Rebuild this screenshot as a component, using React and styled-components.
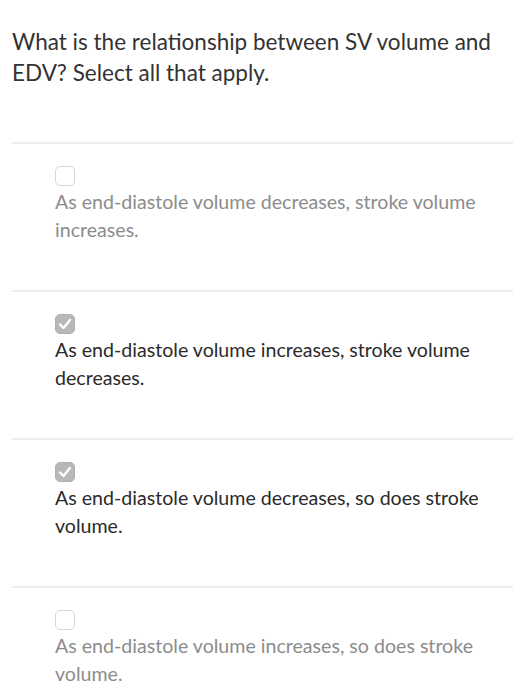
import React from "react";
import styled, { createGlobalStyle } from "styled-components";

const GlobalStyle = createGlobalStyle`
  body {
    margin: 0;
    background: #fff;
    font-family: Lato, "Open Sans", sans-serif;
  }
`;

const Page = styled.div`
  padding: 26px 0 0 12px;
`;

const Question = styled.h1`
  margin: 0;
  padding-right: 12px;
  font-size: 22.5px;
  font-weight: 400;
  line-height: 31px;
  color: #333;
`;

const Spacer = styled.div`
  height: 54px;
`;

const Option = styled.div`
  border-top: 2px solid #ededed;
  padding: 22px 12px 45px 43px;
  height: 148px;
  box-sizing: border-box;
`;

const Box = styled.div`
  width: 20px;
  height: 20px;
  box-sizing: border-box;
  border-radius: 5px;
  border: 1px solid ${({ checked }) => (checked ? "#b0b0b0" : "#d8d8d8")};
  background: ${({ checked }) => (checked ? "#b8b8b8" : "#fff")};
  display: flex;
  align-items: center;
  justify-content: center;
  margin-bottom: 2px;
`;

const Label = styled.div`
  font-size: 19.6px;
  line-height: 28px;
  color: ${({ checked }) => (checked ? "#2b2b2b" : "#8c8c8c")};
`;

const options = [
  { text: "As end-diastole volume decreases, stroke volume increases.", checked: false },
  { text: "As end-diastole volume increases, stroke volume decreases.", checked: true },
  { text: "As end-diastole volume decreases, so does stroke volume.", checked: true },
  { text: "As end-diastole volume increases, so does stroke volume.", checked: false },
];

export default function App() {
  return (
    <Page>
      <GlobalStyle />
      <Question>
        What is the relationship between SV volume and EDV? Select all that apply.
      </Question>
      <Spacer />
      {options.map((o, i) => (
        <Option key={i}>
          <Box checked={o.checked}>
            {o.checked && (
              <svg width="16" height="16" viewBox="0 0 16 16">
                <path d="M3 8.5 L6.5 12 L13 4" fill="none" stroke="#fff" strokeWidth="2.4" strokeLinecap="round" strokeLinejoin="round" />
              </svg>
            )}
          </Box>
          <Label checked={o.checked}>{o.text}</Label>
        </Option>
      ))}
    </Page>
  );
}
